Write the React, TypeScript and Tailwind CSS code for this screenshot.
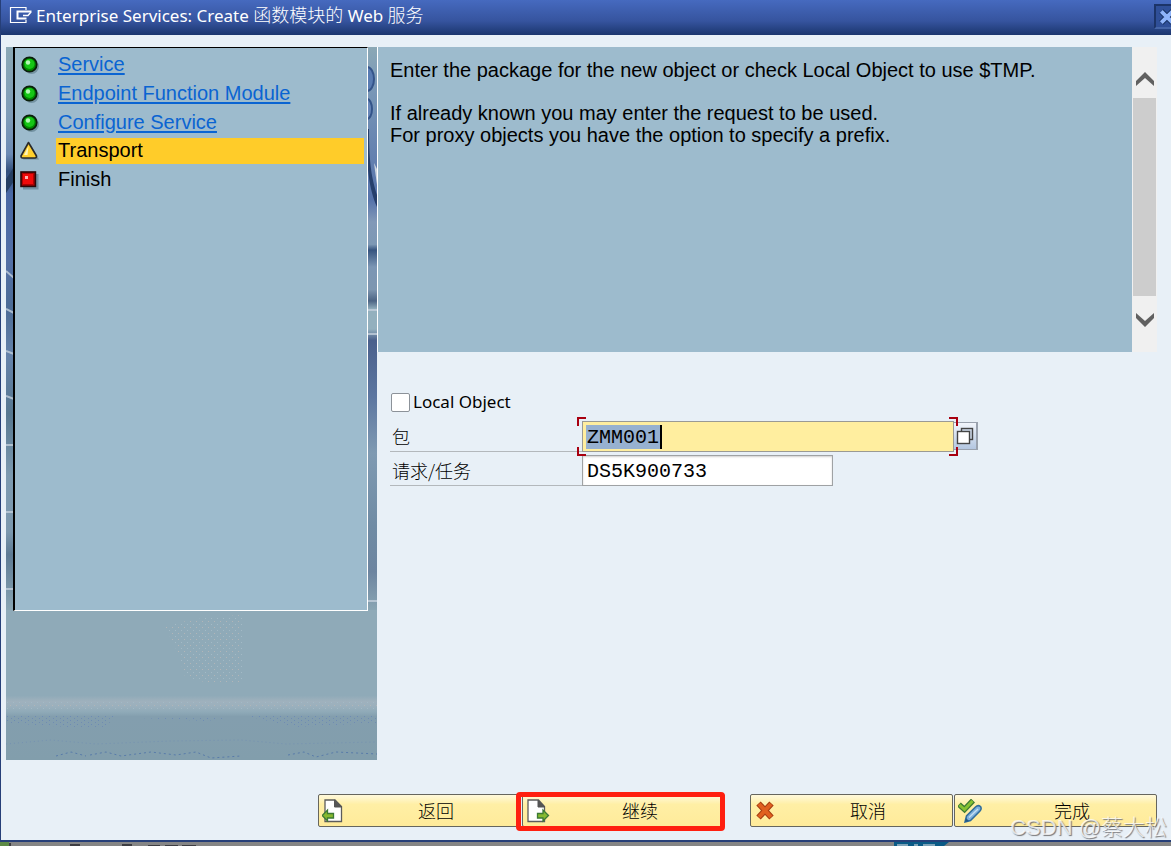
import { useState } from "react";

type StepState = "done" | "current" | "open";

const steps: { label: string; state: StepState }[] = [
  { label: "Service", state: "done" },
  { label: "Endpoint Function Module", state: "done" },
  { label: "Configure Service", state: "done" },
  { label: "Transport", state: "current" },
  { label: "Finish", state: "open" },
];

function StatusIcon({ state }: { state: StepState }) {
  return (
    <svg viewBox="0 0 20 20" className="w-5 h-5 shrink-0" aria-hidden="true">
      {state === "done" && (
        <>
          <circle cx="12.5" cy="12.5" r="7.5" fill="#7392a2" />
          <circle cx="10.5" cy="10.5" r="7.2" fill="#008a00" stroke="#0b1f0b" strokeWidth="1.8" />
          <circle cx="10.5" cy="10" r="5" fill="#16c616" />
          <circle cx="9" cy="8.5" r="2.2" fill="#b4f7b4" />
        </>
      )}
      {state === "current" && (
        <>
          <path d="M12 4L20 18.5H4Z" fill="#7392a2" />
          <path
            d="M9.5 1.5L17.5 15Q17.5 17 16 17H3.5Q2 17 2 15Z"
            fill="#ffd02e"
            stroke="#2a2a2a"
            strokeWidth="1.6"
            strokeLinejoin="round"
          />
          <path d="M9.5 5L5 14H8.5Z" fill="#fff5b8" />
        </>
      )}
      {state === "open" && (
        <>
          <rect x="4" y="4" width="15.5" height="15.5" fill="#7392a2" />
          <rect x="2" y="2" width="14.4" height="14.4" fill="#b00000" stroke="#2a0808" strokeWidth="1.6" />
          <rect x="4" y="4" width="10" height="10" fill="#f00a0a" />
          <rect x="6" y="6" width="3" height="3" fill="#ffb0b0" />
        </>
      )}
    </svg>
  );
}

/* Water picture behind the step list */
function Backdrop() {
  return (
    <svg
      viewBox="0 0 371 713"
      preserveAspectRatio="none"
      className="absolute inset-0 w-full h-full"
      aria-hidden="true"
    >
      <defs>
        <linearGradient id="leftWater" x1="0" y1="0" x2="0" y2="1">
          <stop offset="0" stopColor="#8ba8b5" />
          <stop offset="0.12" stopColor="#7f9cb8" />
          <stop offset="0.19" stopColor="#6c8ab4" />
          <stop offset="0.22" stopColor="#34507c" />
          <stop offset="0.26" stopColor="#4a68a4" />
          <stop offset="0.38" stopColor="#5470a6" />
          <stop offset="0.46" stopColor="#4d6c96" />
          <stop offset="0.55" stopColor="#6683aa" />
          <stop offset="0.65" stopColor="#587890" />
          <stop offset="0.76" stopColor="#7d9ab0" />
          <stop offset="0.86" stopColor="#7c98ae" />
          <stop offset="0.9" stopColor="#5f7b94" />
          <stop offset="1" stopColor="#8aa6b4" />
        </linearGradient>
        <linearGradient id="rightWater" x1="0" y1="0" x2="0" y2="1">
          <stop offset="0" stopColor="#8ba8b5" />
          <stop offset="0.06" stopColor="#7c9ab8" />
          <stop offset="0.22" stopColor="#5f7cae" />
          <stop offset="0.27" stopColor="#5572aa" />
          <stop offset="0.31" stopColor="#8299b8" />
          <stop offset="0.35" stopColor="#7d98b4" />
          <stop offset="0.36" stopColor="#36547f" />
          <stop offset="0.39" stopColor="#7c96b4" />
          <stop offset="0.43" stopColor="#7d96b0" />
          <stop offset="0.45" stopColor="#4c6484" />
          <stop offset="0.465" stopColor="#93b0be" />
          <stop offset="0.5" stopColor="#93b0be" />
          <stop offset="0.52" stopColor="#4a608c" />
          <stop offset="0.62" stopColor="#5c76a0" />
          <stop offset="0.72" stopColor="#7f9ab2" />
          <stop offset="0.85" stopColor="#6f8ba4" />
          <stop offset="0.93" stopColor="#6d85a0" />
          <stop offset="1" stopColor="#8aa6b4" />
        </linearGradient>
        <linearGradient id="pool" x1="0" y1="0" x2="0" y2="1">
          <stop offset="0" stopColor="#8faab8" />
          <stop offset="0.57" stopColor="#8faab8" />
          <stop offset="0.61" stopColor="#9fb1bd" />
          <stop offset="0.64" stopColor="#9bb0bd" />
          <stop offset="0.68" stopColor="#8faab8" />
          <stop offset="0.71" stopColor="#839eae" />
          <stop offset="1" stopColor="#829eac" />
        </linearGradient>
        <pattern id="speck" width="6" height="6" patternUnits="userSpaceOnUse">
          <rect x="1" y="1" width="1" height="1" fill="#a3bac6" />
          <rect x="4" y="4" width="1" height="1" fill="#b2b6b8" />
        </pattern>
        <pattern id="dots" width="7" height="4" patternUnits="userSpaceOnUse">
          <rect x="1" y="1" width="1" height="1" fill="#6d8bb4" />
          <rect x="5" y="3" width="1" height="1" fill="#708cb2" />
        </pattern>
      </defs>
      <rect width="20" height="564" fill="url(#leftWater)" />
      <rect x="351" width="20" height="564" fill="url(#rightWater)" />
      <g stroke="#c3cfdc" strokeWidth="2" opacity="0.8">
        <path d="M0 224L8 231M0 262L8 266M0 304L8 307M0 349L8 352M0 398H8M0 465H8M0 542H8" />
        <path d="M361 263H371M361 287H371M361 554H371" />
      </g>
      <path d="M0 132L8 120V134L0 146Z" fill="#263f63" />
      <ellipse cx="361" cy="32" rx="7" ry="12" fill="#587bb2" stroke="#34548a" strokeWidth="2" />
      <ellipse cx="361" cy="62" rx="5" ry="10" fill="#6886b8" stroke="#34548a" strokeWidth="2" />
      <path d="M363 82C363 118 366 132 371 148V160C363 142 360 118 361 82Z" fill="#263f6c" />
      <path d="M368 116L371 122V138Z" fill="#cdd6e0" />
      <rect y="563" width="371" height="150" fill="url(#pool)" />
      <path d="M158 580Q185 570 237 568V635Q200 640 178 628Q172 600 158 580Z" fill="url(#speck)" />
      <rect y="653" width="371" height="10" fill="url(#speck)" />
      <path
        d="M0 668H110L100 680H60L0 676ZM110 670H230L200 674ZM235 668H371V676L290 680Z"
        fill="url(#dots)"
      />
      <path
        d="M0 697L45 693L90 697L165 694L235 693L280 697L371 695"
        fill="none"
        stroke="#7592b1"
        strokeDasharray="1 3"
      />
      <path
        d="M50 709L65 705L80 709M84 708L100 705L115 709L145 705L170 708L190 705L205 711L235 709M282 708L298 705L310 710L330 705L371 707"
        fill="none"
        stroke="#587ba9"
        strokeWidth="1"
        strokeDasharray="2 3"
      />
    </svg>
  );
}

function PageIcon({ direction }: { direction: "back" | "next" }) {
  const back = direction === "back";
  return (
    <svg viewBox="0 0 24 24" className="w-6 h-6" aria-hidden="true">
      <path
        d={back ? "M3 1H13L19.5 7.5V22.5H3Z" : "M2 1H12.5L18.5 7.5V22.5H2Z"}
        fill="#fff"
        stroke="#5c5c5c"
        strokeWidth="1.3"
      />
      <path d={back ? "M12.5 1V8H20Z" : "M12 1V8H19Z"} fill="#555" stroke="#555" />
      <path
        d={back ? "M0.2 16.5L5.5 11V14.5H11.5V19H5.5V22Z" : "M22.5 16.5L17 11V14.5H11.5V19H17V22Z"}
        fill="#86b92e"
        stroke="#3c7a34"
        strokeWidth="1.3"
      />
    </svg>
  );
}

function CancelIcon() {
  return (
    <svg viewBox="0 0 24 24" className="w-6 h-6" aria-hidden="true">
      <path d="M4.5 4.5L17.5 18.5M17.5 4.5L4.5 18.5" stroke="#a53c12" strokeWidth="6" />
      <path d="M5 5L17 18M17 5L5 18" stroke="#e0601f" strokeWidth="4" />
    </svg>
  );
}

function CompleteIcon() {
  return (
    <svg viewBox="0 0 24 24" className="w-6 h-6" aria-hidden="true">
      <path d="M1 5.5L6.5 10.5L15 1.5" fill="none" stroke="#3c7a34" strokeWidth="5.5" />
      <path d="M1.5 6L6.5 10.5L14.5 2" fill="none" stroke="#86c232" strokeWidth="3" />
      <path d="M7 23L8.5 17L17.5 8Q20 5.5 22.5 7.5Q24 10 22 12L12.5 21.5Z" fill="#7db0dc" stroke="#2f6c9c" strokeWidth="1.5" />
      <path d="M7 23L8 19L11 22Z" fill="#245a86" />
      <path d="M11 18.5L20 10" stroke="#c3def2" strokeWidth="1.5" />
    </svg>
  );
}

function WizardButton({ label, icon }: { label: string; icon: React.ReactNode }) {
  return (
    <button
      type="button"
      className="flex w-[203px] h-[33px] items-center gap-1.5 rounded-xs border border-[#66665e] bg-linear-to-b from-[#fff9dc] via-[#ffefa5] via-30% to-[#ffeb9a] pl-[3px] text-lg leading-6 font-light text-black"
    >
      {icon}
      <span className="flex-1 pb-0.5">{label}</span>
    </button>
  );
}

/* Red corner marks round the field that has the focus */
function FocusCorners() {
  return (
    <>
      <span className="absolute -left-1.5 -top-[5px] w-[9px] h-[9px] border-l-2 border-t-2 border-[#a80010]" />
      <span className="absolute -left-1.5 -bottom-[5px] w-[9px] h-[9px] border-l-2 border-b-2 border-[#a80010]" />
      <span className="absolute -right-[5px] -top-[5px] z-10 w-[9px] h-[9px] border-r-2 border-t-2 border-[#a80010]" />
      <span className="absolute -right-[5px] -bottom-[5px] z-10 w-[9px] h-[9px] border-r-2 border-b-2 border-[#a80010]" />
    </>
  );
}

export default function App() {
  const [localObject, setLocalObject] = useState(false);
  const [pkg, setPkg] = useState("ZMM001");
  const [request, setRequest] = useState("DS5K900733");

  return (
    <div className="relative min-h-screen overflow-hidden bg-[#858585] font-['Noto_Sans_CJK_SC',sans-serif] text-black">
      <div className="border-l border-b-2 border-[#263f78] bg-[#e8f0f7]">
        {/* Title bar */}
        <header className="flex h-[35px] items-start justify-between bg-linear-to-b from-[#466abf] via-[#36549f] via-60% to-[#1b366e] pl-2 text-white">
          <div className="flex h-[30px] items-center gap-[3px]">
            <svg viewBox="0 0 24 18" className="w-6 h-[18px]" fill="none" stroke="#fff" aria-hidden="true">
              <path d="M17 4V1.5H1.5V16.5H17V14" strokeWidth="1.2" />
              <path d="M22.5 5.5H8.5V12.5H17.5" strokeWidth="2" />
              <path d="M14 9.5H19L22 6" strokeWidth="1.4" />
            </svg>
            <h1 className="text-[17px] leading-6 font-['Noto_Sans',sans-serif] whitespace-nowrap">
              Enterprise Services: Create{" "}
              <span className="font-['Noto_Sans_CJK_SC',sans-serif] text-lg leading-6 font-light">函数模块的</span> Web{" "}
              <span className="font-['Noto_Sans_CJK_SC',sans-serif] text-lg leading-6 font-light">服务</span>
            </h1>
          </div>
          <button
            type="button"
            aria-label="Close"
            className="mt-1 -mr-2 flex w-[25px] h-[25px] shrink-0 items-center justify-center border-2 border-[#1c3468] border-b-[#4565a8] bg-[#2f4f98]"
          >
            <svg viewBox="0 0 14 14" className="w-4 h-4" aria-hidden="true">
              <path d="M2 2L12 12M12 2L2 12" stroke="#16305f" strokeWidth="5" />
              <path d="M2 2L12 12M12 2L2 12" stroke="#8fb4fa" strokeWidth="3.4" />
            </svg>
          </button>
        </header>

        <main className="flex pt-3 pl-[5px] pr-3.5">
          {/* Steps */}
          <nav className="relative h-[713px] w-[371px] shrink-0 pl-[7px] pr-[9px]">
            <Backdrop />
            <ol className="relative flex h-[564px] flex-col gap-[3px] border-t border-l-2 border-r border-b border-t-black border-l-black border-r-white border-b-white bg-[#9dbbcd] py-[3px] pl-1 pr-[3px] font-['Liberation_Sans',sans-serif] text-xl leading-6">
              {steps.map((step) => (
                <li key={step.label} className="flex h-[26px] items-center gap-[17px]">
                  <StatusIcon state={step.state} />
                  <span
                    className={
                      step.state === "current" ? "h-[26px] flex-1 bg-[#ffcc29] pl-0.5" : "h-[26px] flex-1 pl-0.5"
                    }
                  >
                    {step.state === "done" ? (
                      <a href="#" className="leading-[26px] text-[#0a64d2] underline underline-offset-2">
                        {step.label}
                      </a>
                    ) : (
                      step.label
                    )}
                  </span>
                </li>
              ))}
            </ol>
          </nav>

          <section className="min-w-0 flex-1">
            {/* Help text */}
            <div className="flex h-[305px] border-l border-white bg-[#9dbbcd]">
              <div className="flex-1 pl-3 pt-3 font-['Liberation_Sans',sans-serif] text-xl leading-[22px]">
                <p>Enter the package for the new object or check Local Object to use $TMP.</p>
                <p className="mt-[21px]">If already known you may enter the request to be used.</p>
                <p>For proxy objects you have the option to specify a prefix.</p>
              </div>
              <div className="flex w-[25px] flex-col bg-[#f0f0f0] px-px">
                <button type="button" aria-label="Scroll up" className="flex h-[51px] items-end justify-center pb-3">
                  <svg viewBox="0 0 18 14" className="w-[18px] h-3.5" aria-hidden="true">
                    <path d="M0 9L9 0L18 9V14L9 6L0 14Z" fill="#606060" />
                  </svg>
                </button>
                <div className="h-[198px] bg-[#cdcdcd]" />
                <button type="button" aria-label="Scroll down" className="flex flex-1 items-start justify-center pt-[17px]">
                  <svg viewBox="0 0 18 14" className="w-[18px] h-3.5" aria-hidden="true">
                    <path d="M0 5L9 14L18 5V0L9 8L0 0Z" fill="#606060" />
                  </svg>
                </button>
              </div>
            </div>

            {/* Form */}
            <form className="pl-[13px] pt-[38px]">
              <label className="flex h-6 w-fit items-center gap-[3px] font-['Noto_Sans',sans-serif] text-[17px] leading-6">
                <input
                  type="checkbox"
                  checked={localObject}
                  onChange={(e) => setLocalObject(e.target.checked)}
                  className="ml-px w-[19px] h-[19px] appearance-none rounded-xs border border-[#8c9299] bg-white checked:bg-[#36549f]"
                />
                Local Object
              </label>

              <div className="mt-[7px] flex items-start">
                <label htmlFor="package" className="h-[31px] w-48 border-b border-[#b3b8bc] pl-0.5 text-lg leading-[30px] font-light">
                  包
                </label>
                <div className="relative h-[31px] w-[372px] border border-[#9a9a94] bg-[#ffee9f]">
                  <span className="absolute left-[3px] top-[3px] h-6 w-[76px] border-r-2 border-black bg-[#97b1d0]" />
                  <input
                    id="package"
                    type="text"
                    value={pkg}
                    onChange={(e) => setPkg(e.target.value)}
                    className="relative h-full w-full bg-transparent pt-0.5 pl-1 font-['Liberation_Mono',monospace] text-xl leading-6 outline-none"
                  />
                  <FocusCorners />
                </div>
                <button
                  type="button"
                  aria-label="Search help"
                  className="mt-px flex h-7 w-6 items-center justify-start border border-l-0 border-[#9aa2ae] border-r-2 bg-linear-to-b from-[#f2f6fc] to-[#b3c6e0] pl-0.5"
                >
                  <svg viewBox="0 0 18 18" className="w-[18px] h-[18px]" stroke="#444" strokeWidth="1.4" aria-hidden="true">
                    <rect x="5.5" y="1.5" width="11" height="11" fill="#ccd8e8" />
                    <rect x="1.5" y="4.5" width="12" height="12" fill="#fff" />
                  </svg>
                </button>
              </div>

              <div className="mt-[3px] flex items-start">
                <label htmlFor="request" className="h-[31px] w-48 border-b border-[#b3b8bc] pl-0.5 text-lg leading-[30px] font-light">
                  请求/任务
                </label>
                <input
                  id="request"
                  type="text"
                  value={request}
                  onChange={(e) => setRequest(e.target.value)}
                  className="h-[31px] w-[251px] border border-[#9fa2a4] bg-white pt-0.5 pl-1 font-['Liberation_Mono',monospace] text-xl leading-6 shadow-[inset_0_1px_2px_#d0d0d0] outline-none"
                />
              </div>
            </form>
          </section>
        </main>

        <footer className="flex justify-end gap-px pt-[34px] pb-[13px] pr-3.5">
          <WizardButton label="返回" icon={<PageIcon direction="back" />} />
          <div className="relative mr-6">
            <WizardButton label="继续" icon={<PageIcon direction="next" />} />
            <span className="pointer-events-none absolute -top-0.5 right-0 -bottom-1 -left-1.5 rounded-sm border-5 border-[#ff1f10]" />
          </div>
          <WizardButton label="取消" icon={<CancelIcon />} />
          <WizardButton label="完成" icon={<CompleteIcon />} />
        </footer>
      </div>

      {/* Strip of the screen below the dialog */}
      <svg viewBox="0 0 1171 4" className="block h-1 w-full" preserveAspectRatio="none" aria-hidden="true">
        <rect width="9" height="4" fill="#5d8a45" />
        <path d="M9 1H11V4H9ZM70 2H80V4H70ZM122 2H132V4H122ZM148 3H160V4H148ZM165 3H178V4H165ZM182 3H196V4H182Z" fill="#3d3d42" />
        <path d="M894 0H949L944 4H894Z" fill="#0a5a86" />
        <path d="M897 2H908V4H897ZM914 2H918V4H914ZM923 2H935V4H923Z" fill="#7ea3b8" />
      </svg>

      <div className="pointer-events-none absolute bottom-0.5 right-1 font-['Liberation_Sans','Noto_Sans_CJK_SC',sans-serif] text-[22px] leading-8 font-light text-white/75 [text-shadow:1px_1px_1px_#77777a]">
        CSDN @蔡大松
      </div>
    </div>
  );
}
